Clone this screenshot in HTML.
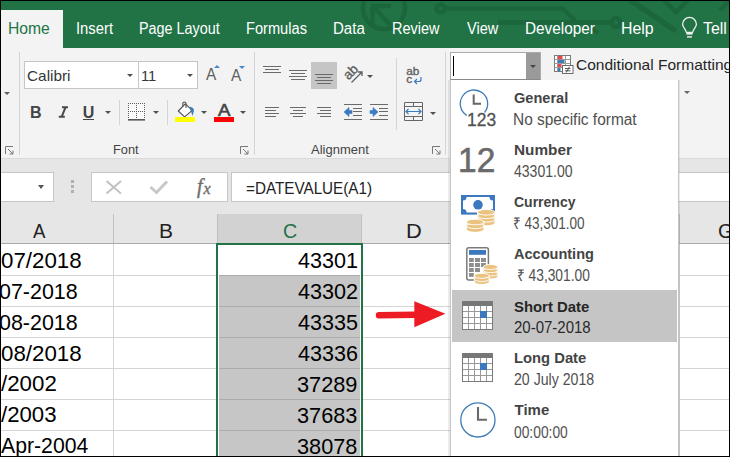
<!DOCTYPE html><html><head><meta charset="utf-8"><style>
html,body{margin:0;padding:0;}
body{width:730px;height:457px;overflow:hidden;position:relative;background:#000;font-family:"Liberation Sans",sans-serif;}
.b{position:absolute;box-sizing:border-box;}
.t{position:absolute;white-space:nowrap;transform-origin:0 0;}
svg{position:absolute;overflow:visible;}
</style></head><body>
<div class="b" style="left:1px;top:1px;width:728px;height:455px;background:#fff"></div>
<div class="b" style="left:1px;top:1px;width:728px;height:47px;background:#217346"></div>
<svg style="left:1px;top:1px;overflow:hidden" width="728" height="47" viewBox="1 1 728 47">
<g fill="none" stroke="#1c663c" stroke-width="4.5">
<circle cx="384" cy="8" r="21"/>
<path d="M374 7 L392 27 M371 6 H391 M372.5 6 V26" />
<circle cx="440.5" cy="8.5" r="4"/>
<path d="M444.5 8.5 H563 L577 22.5 H611"/>
<path d="M498 22.5 H584 L598 33"/><circle cx="616" cy="22.5" r="4.5"/>
<path d="M630 0 L676 31" stroke-width="5.5"/>
<path d="M662 -2 L676 12 L690 -2"/>
<path d="M720 10 L732 -2"/>
</g></svg>
<div class="b" style="left:1px;top:10px;width:62px;height:38px;background:#f3f3f3"></div>
<div class="t" style="left:8.45px;top:21px;font-size:16px;line-height:16px;color:#217346;transform:scaleX(0.9793);">Home</div>
<div class="t" style="left:75.67px;top:21px;font-size:16px;line-height:16px;color:#fff;transform:scaleX(0.9252);">Insert</div>
<div class="t" style="left:139.15px;top:21px;font-size:16px;line-height:16px;color:#fff;transform:scaleX(0.8974);">Page Layout</div>
<div class="t" style="left:246.33px;top:21px;font-size:16px;line-height:16px;color:#fff;transform:scaleX(0.9140);">Formulas</div>
<div class="t" style="left:333.30px;top:21px;font-size:16px;line-height:16px;color:#fff;transform:scaleX(0.9390);">Data</div>
<div class="t" style="left:392.24px;top:21px;font-size:16px;line-height:16px;color:#fff;transform:scaleX(0.9043);">Review</div>
<div class="t" style="left:467.33px;top:21px;font-size:16px;line-height:16px;color:#fff;transform:scaleX(0.9062);">View</div>
<div class="t" style="left:525.37px;top:21px;font-size:16px;line-height:16px;color:#fff;transform:scaleX(0.9585);">Developer</div>
<div class="t" style="left:621.43px;top:21px;font-size:16px;line-height:16px;color:#fff;transform:scaleX(0.9916);">Help</div>
<div class="t" style="left:702.68px;top:21px;font-size:16px;line-height:16px;color:#fff;transform:scaleX(0.9938);">Tell</div>
<svg style="left:678px;top:14px" width="24" height="26" viewBox="678 14 24 26">
<path d="M686.3 32.3 C686 29.5 682.6 27.5 682.6 24.3 A6.9 6.9 0 0 1 696.4 24.3 C696.4 27.5 693 29.5 692.7 32.3 Z" fill="none" stroke="#f0f0f0" stroke-width="1.3" stroke-linejoin="round"/>
<rect x="686.4" y="32.8" width="6.2" height="1.8" fill="#f0f0f0"/>
<rect x="687" y="36.2" width="5" height="1.4" fill="#f0f0f0"/>
</svg>
<div class="b" style="left:1px;top:48px;width:728px;height:110px;background:#f3f3f3"></div>
<div class="b" style="left:1px;top:158px;width:728px;height:1px;background:#dadada"></div>
<div class="b" style="left:1px;top:159px;width:728px;height:85px;background:#e6e6e6"></div>
<div class="b" style="left:19px;top:52px;width:1px;height:103px;background:#d4d4d4"></div>
<div class="b" style="left:254px;top:52px;width:1px;height:103px;background:#d4d4d4"></div>
<div class="b" style="left:445px;top:52px;width:1px;height:103px;background:#d4d4d4"></div>
<div class="b" style="left:396px;top:58px;width:1px;height:72px;background:#d4d4d4"></div>
<div class="b" style="left:119px;top:100px;width:1px;height:25px;background:#d4d4d4"></div>
<div class="b" style="left:167px;top:100px;width:1px;height:25px;background:#d4d4d4"></div>
<div class="b" style="left:4px;top:92px;width:0;height:0;border-left:3.0px solid transparent;border-right:3.0px solid transparent;border-top:3px solid #606060;"></div>
<div class="b" style="left:24px;top:61px;width:115px;height:28px;background:#fff;border:1px solid #c6c6c6"></div>
<div class="b" style="left:138px;top:61px;width:60px;height:28px;background:#fff;border:1px solid #c6c6c6"></div>
<div class="t" style="left:26.73px;top:68px;font-size:15px;line-height:15px;color:#363636;transform:scaleX(1.0239);">Calibri</div>
<div class="t" style="left:140.89px;top:68px;font-size:15px;line-height:15px;color:#363636;transform:scaleX(0.9836);">11</div>
<div class="b" style="left:127px;top:74px;width:0;height:0;border-left:3.0px solid transparent;border-right:3.0px solid transparent;border-top:3px solid #505050;"></div>
<div class="b" style="left:187px;top:74px;width:0;height:0;border-left:3.0px solid transparent;border-right:3.0px solid transparent;border-top:3px solid #505050;"></div>
<div class="t" style="left:206.20px;top:67px;font-size:16px;line-height:16px;color:#606060;transform:scaleX(0.9586);">A</div>
<div class="t" style="left:231.20px;top:68px;font-size:16px;line-height:16px;color:#606060;transform:scaleX(0.9586);">A</div>
<div class="b" style="left:214px;top:65px;width:0;height:0;border-left:3px solid transparent;border-right:3px solid transparent;border-bottom:3px solid #4a86c8"></div>
<div class="b" style="left:239px;top:66px;width:0;height:0;border-left:3.0px solid transparent;border-right:3.0px solid transparent;border-top:3px solid #4a86c8;"></div>
<div class="t" style="left:29.96px;top:105px;font-size:16px;line-height:16px;color:#444;font-weight:bold;">B</div>
<svg style="left:55px;top:104px" width="16" height="16" viewBox="55 104 16 16"><path d="M62 107.2 H68 M58.8 116.8 H64.8 M65.6 107.2 L61.6 116.8" fill="none" stroke="#4a4a4a" stroke-width="2"/></svg>
<div class="t" style="left:82.74px;top:105px;font-size:16px;line-height:16px;color:#444;font-weight:bold;">U</div>
<div class="b" style="left:83px;top:119px;width:11px;height:1px;background:#444"></div>
<div class="b" style="left:105px;top:111px;width:0;height:0;border-left:3.0px solid transparent;border-right:3.0px solid transparent;border-top:3px solid #505050;"></div>
<div class="b" style="left:153px;top:111px;width:0;height:0;border-left:3.0px solid transparent;border-right:3.0px solid transparent;border-top:3px solid #505050;"></div>
<div class="b" style="left:201px;top:111px;width:0;height:0;border-left:3.0px solid transparent;border-right:3.0px solid transparent;border-top:3px solid #505050;"></div>
<div class="b" style="left:240px;top:111px;width:0;height:0;border-left:3.0px solid transparent;border-right:3.0px solid transparent;border-top:3px solid #505050;"></div>
<svg style="left:124px;top:98px" width="26" height="26" viewBox="124 98 26 26">
<rect x="128" y="103" width="17" height="16" fill="#fbfbfb"/>
<g fill="#5a5a5a"><rect x="128" y="103" width="1" height="1"/><rect x="128" y="105" width="1" height="1"/><rect x="128" y="107" width="1" height="1"/><rect x="128" y="109" width="1" height="1"/><rect x="128" y="111" width="1" height="1"/><rect x="128" y="113" width="1" height="1"/><rect x="128" y="115" width="1" height="1"/><rect x="128" y="117" width="1" height="1"/><rect x="130" y="103" width="1" height="1"/><rect x="130" y="111" width="1" height="1"/><rect x="132" y="103" width="1" height="1"/><rect x="132" y="111" width="1" height="1"/><rect x="134" y="103" width="1" height="1"/><rect x="134" y="111" width="1" height="1"/><rect x="136" y="103" width="1" height="1"/><rect x="136" y="105" width="1" height="1"/><rect x="136" y="107" width="1" height="1"/><rect x="136" y="109" width="1" height="1"/><rect x="136" y="111" width="1" height="1"/><rect x="136" y="113" width="1" height="1"/><rect x="136" y="115" width="1" height="1"/><rect x="136" y="117" width="1" height="1"/><rect x="138" y="103" width="1" height="1"/><rect x="138" y="111" width="1" height="1"/><rect x="140" y="103" width="1" height="1"/><rect x="140" y="111" width="1" height="1"/><rect x="142" y="103" width="1" height="1"/><rect x="142" y="111" width="1" height="1"/><rect x="144" y="103" width="1" height="1"/><rect x="144" y="105" width="1" height="1"/><rect x="144" y="107" width="1" height="1"/><rect x="144" y="109" width="1" height="1"/><rect x="144" y="111" width="1" height="1"/><rect x="144" y="113" width="1" height="1"/><rect x="144" y="115" width="1" height="1"/><rect x="144" y="117" width="1" height="1"/></g>
<rect x="128" y="119" width="17" height="1.6" fill="#555"/></svg>
<svg style="left:172px;top:98px" width="26" height="26" viewBox="172 98 26 26">
<path d="M178.3 111 L185.3 103.8 L192.2 110.3 L184.6 116.8 Z" fill="#fff" stroke="#505050" stroke-width="1.1" stroke-linejoin="round"/>
<path d="M182.8 106.5 V103.6 A1.6 1.6 0 0 1 186 103.6 V108" fill="none" stroke="#505050" stroke-width="1.1"/>
<path d="M189.5 107 C192.5 106.8 194.5 109 193.8 111.5 C193.5 113 192.8 114.5 192.3 116 C191.8 114 191.5 112 190.6 110.6 Z" fill="#3d7ab8"/>
<rect x="175" y="117" width="20" height="5" fill="#ffff00"/></svg>
<div class="t" style="left:217.90px;top:102px;font-size:17px;line-height:17px;color:#454545;transform:scaleX(1.0969);-webkit-text-stroke:0.6px #454545;">A</div>
<div class="b" style="left:214px;top:117px;width:20px;height:5px;background:#ff0000"></div>
<div class="b" style="left:263px;top:66px;width:18px;height:1px;background:#6a6a6a"></div>
<div class="b" style="left:265px;top:69px;width:14px;height:1px;background:#6a6a6a"></div>
<div class="b" style="left:263px;top:72px;width:18px;height:1px;background:#6a6a6a"></div>
<div class="b" style="left:289px;top:70px;width:18px;height:1px;background:#6a6a6a"></div>
<div class="b" style="left:291px;top:73px;width:14px;height:1px;background:#6a6a6a"></div>
<div class="b" style="left:289px;top:76px;width:18px;height:1px;background:#6a6a6a"></div>
<div class="b" style="left:291px;top:79px;width:14px;height:1px;background:#6a6a6a"></div>
<div class="b" style="left:311px;top:62px;width:26px;height:27px;background:#c5c5c5"></div>
<div class="b" style="left:315px;top:74px;width:18px;height:1px;background:#6a6a6a"></div>
<div class="b" style="left:317px;top:77px;width:14px;height:1px;background:#6a6a6a"></div>
<div class="b" style="left:315px;top:80px;width:18px;height:1px;background:#6a6a6a"></div>
<div class="b" style="left:317px;top:83px;width:14px;height:1px;background:#6a6a6a"></div>
<div class="b" style="left:265px;top:107px;width:14px;height:1px;background:#6a6a6a"></div>
<div class="b" style="left:265px;top:110px;width:11px;height:1px;background:#6a6a6a"></div>
<div class="b" style="left:265px;top:113px;width:14px;height:1px;background:#6a6a6a"></div>
<div class="b" style="left:265px;top:116px;width:11px;height:1px;background:#6a6a6a"></div>
<div class="b" style="left:290px;top:107px;width:16px;height:1px;background:#6a6a6a"></div>
<div class="b" style="left:293px;top:110px;width:10px;height:1px;background:#6a6a6a"></div>
<div class="b" style="left:290px;top:113px;width:16px;height:1px;background:#6a6a6a"></div>
<div class="b" style="left:293px;top:116px;width:10px;height:1px;background:#6a6a6a"></div>
<div class="b" style="left:317px;top:107px;width:14px;height:1px;background:#6a6a6a"></div>
<div class="b" style="left:320px;top:110px;width:11px;height:1px;background:#6a6a6a"></div>
<div class="b" style="left:317px;top:113px;width:14px;height:1px;background:#6a6a6a"></div>
<div class="b" style="left:320px;top:116px;width:11px;height:1px;background:#6a6a6a"></div>
<div class="b" style="left:344px;top:104px;width:18px;height:1px;background:#6a6a6a"></div>
<div class="b" style="left:353px;top:108px;width:9px;height:1px;background:#6a6a6a"></div>
<div class="b" style="left:353px;top:111px;width:9px;height:1px;background:#6a6a6a"></div>
<div class="b" style="left:353px;top:115px;width:9px;height:1px;background:#6a6a6a"></div>
<div class="b" style="left:344px;top:119px;width:18px;height:1px;background:#6a6a6a"></div>
<div class="b" style="left:370px;top:104px;width:18px;height:1px;background:#6a6a6a"></div>
<div class="b" style="left:379px;top:108px;width:9px;height:1px;background:#6a6a6a"></div>
<div class="b" style="left:379px;top:111px;width:9px;height:1px;background:#6a6a6a"></div>
<div class="b" style="left:379px;top:115px;width:9px;height:1px;background:#6a6a6a"></div>
<div class="b" style="left:370px;top:119px;width:18px;height:1px;background:#6a6a6a"></div>
<svg style="left:340px;top:100px" width="50" height="24" viewBox="340 100 50 24">
<path d="M344 112 L349 107.5 V110.5 H352 V113.5 H349 V116.5 Z" fill="#3b7bc4" stroke="#3b7bc4" stroke-width="0.6" stroke-linejoin="round"/>
<path d="M378 112 L373 107.5 V110.5 H370 V113.5 H373 V116.5 Z" fill="#3b7bc4" stroke="#3b7bc4" stroke-width="0.6" stroke-linejoin="round"/>
</svg>
<svg style="left:340px;top:62px" width="26" height="24" viewBox="340 62 26 24">
<text x="0" y="0" transform="translate(348.5 80.5) rotate(-45)" font-family="Liberation Sans" font-size="13.5" fill="#5e5e5e" stroke="#5e5e5e" stroke-width="0.35">ab</text>
<path d="M351.5 82.5 L361.5 72.5 M358 72 H362 V76" fill="none" stroke="#5e5e5e" stroke-width="1.3"/></svg>
<div class="b" style="left:367px;top:75px;width:0;height:0;border-left:3.0px solid transparent;border-right:3.0px solid transparent;border-top:3px solid #505050;"></div>
<svg style="left:404px;top:64px" width="22" height="22" viewBox="404 64 22 22">
<text x="0" y="0" transform="translate(406.2 74.8) scale(1.18 1)" font-family="Liberation Sans" font-size="10" fill="#5e5e5e" stroke="#5e5e5e" stroke-width="0.3">ab</text>
<text x="0" y="0" transform="translate(406.2 82.7) scale(1.18 1)" font-family="Liberation Sans" font-size="10" fill="#5e5e5e" stroke="#5e5e5e" stroke-width="0.3">c</text>
<path d="M421 77 V79.5 A2 2 0 0 1 419 81.5 H414.5 M417 79 L414.5 81.5 L417 84" fill="none" stroke="#3b7bc4" stroke-width="1.2"/></svg>
<svg style="left:402px;top:100px" width="24" height="24" viewBox="402 100 24 24">
<path d="M404.5 102.5 H422.5 V120.5 H404.5 Z M404.5 106.5 H422.5 M404.5 116.5 H422.5 M413.5 102.5 V106.5 M413.5 116.5 V120.5" fill="none" stroke="#666" stroke-width="1"/>
<path d="M406 111.5 H421 M408.5 109 L406 111.5 L408.5 114 M418.5 109 L421 111.5 L418.5 114" fill="none" stroke="#3b7bc4" stroke-width="1.2"/></svg>
<div class="b" style="left:430px;top:112px;width:0;height:0;border-left:3.0px solid transparent;border-right:3.0px solid transparent;border-top:3px solid #505050;"></div>
<div class="t" style="left:113.48px;top:144px;font-size:12px;line-height:12px;color:#444;transform:scaleX(1.0661);">Font</div>
<div class="t" style="left:311.00px;top:144px;font-size:12px;line-height:12px;color:#444;transform:scaleX(1.0830);">Alignment</div>
<svg style="left:5px;top:146px" width="10" height="9" viewBox="0 0 10 9">
<path d="M0.5 8 V0.5 H8" fill="none" stroke="#777" stroke-width="1"/><path d="M3 3 L8 8 M8 4.5 V8 H4.5" fill="none" stroke="#777" stroke-width="1"/></svg>
<svg style="left:240px;top:146px" width="10" height="9" viewBox="0 0 10 9">
<path d="M0.5 8 V0.5 H8" fill="none" stroke="#777" stroke-width="1"/><path d="M3 3 L8 8 M8 4.5 V8 H4.5" fill="none" stroke="#777" stroke-width="1"/></svg>
<svg style="left:432px;top:146px" width="10" height="9" viewBox="0 0 10 9">
<path d="M0.5 8 V0.5 H8" fill="none" stroke="#777" stroke-width="1"/><path d="M3 3 L8 8 M8 4.5 V8 H4.5" fill="none" stroke="#777" stroke-width="1"/></svg>
<div class="b" style="left:450px;top:52px;width:91px;height:28px;background:#fff;border:1px solid #ababab;border-bottom-color:#8a8a8a"></div>
<div class="b" style="left:526px;top:53px;width:14px;height:26px;background:#9a9a9a"></div>
<div class="b" style="left:530px;top:65px;width:0;height:0;border-left:3.0px solid transparent;border-right:3.0px solid transparent;border-top:3px solid #444;"></div>
<div class="b" style="left:453px;top:56px;width:1px;height:20px;background:#000"></div>
<svg style="left:548px;top:50px" width="30" height="30" viewBox="548 50 30 30">
<rect x="554.5" y="55.5" width="16" height="16" fill="#fff" stroke="#7a7a7a" stroke-width="1"/>
<path d="M557.5 55.5 V71.5 M565.5 55.5 V71.5 M554.5 59.5 H570.5 M554.5 63.5 H570.5 M554.5 67.5 H570.5" stroke="#9a9a9a" stroke-width="1"/>
<rect x="558" y="56" width="4.5" height="3.2" fill="#e8474a"/>
<rect x="558" y="60" width="6.5" height="3" fill="#3d7ab8"/>
<rect x="558" y="64" width="3.5" height="3" fill="#e8474a"/>
<rect x="558" y="68" width="2.5" height="3.3" fill="#3d7ab8"/>
<rect x="562.5" y="65.5" width="10.5" height="8" fill="#fff" stroke="#6a6a6a" stroke-width="1"/>
<path d="M565 68.6 H570.5 M565 70.8 H570.5 M569.3 66.8 L566.2 72.6" stroke="#444" stroke-width="0.9"/>
</svg>
<div class="t" style="left:575.82px;top:57px;font-size:15px;line-height:15px;color:#262626;transform:scaleX(1.0350);">Conditional Formatting</div>
<div class="b" style="left:684px;top:91px;width:0;height:0;border-left:3.0px solid transparent;border-right:3.0px solid transparent;border-top:3px solid #666;"></div>
<div class="b" style="left:-10px;top:172px;width:64px;height:30px;background:#fff;border:1px solid #c6c6c6"></div>
<div class="b" style="left:38px;top:185px;width:0;height:0;border-left:3.5px solid transparent;border-right:3.5px solid transparent;border-top:4px solid #555;"></div>
<div class="b" style="left:71px;top:180px;width:3px;height:3px;background:#b0b0b0"></div>
<div class="b" style="left:71px;top:185px;width:3px;height:3px;background:#b0b0b0"></div>
<div class="b" style="left:71px;top:190px;width:3px;height:3px;background:#b0b0b0"></div>
<div class="b" style="left:91px;top:172px;width:137px;height:30px;background:#fff;border:1px solid #c6c6c6"></div>
<svg style="left:100px;top:175px" width="75" height="25" viewBox="100 175 75 25">
<path d="M106.5 181 L121 193.5 M121 181 L106.5 193.5" stroke="#c2c2c2" stroke-width="2"/>
<path d="M150.5 187 L156.5 192.5 L167 181.5" fill="none" stroke="#c8c8c8" stroke-width="3"/></svg>
<div class="t" style="left:197px;top:176px;font:italic 20px/20px 'Liberation Serif';color:#6e6e6e;-webkit-text-stroke:0.4px #6e6e6e">f</div><div class="t" style="left:203.5px;top:181px;font:italic 16px/16px 'Liberation Serif';color:#6e6e6e;-webkit-text-stroke:0.4px #6e6e6e">x</div>
<div class="b" style="left:231px;top:172px;width:500px;height:30px;background:#fff;border:1px solid #c6c6c6"></div>
<div class="t" style="left:245.54px;top:181px;font-size:16px;line-height:16px;color:#222;transform:scaleX(0.9528);">=DATEVALUE(A1)</div>
<div class="b" style="left:218px;top:214px;width:144px;height:30px;background:#d2d2d2"></div>
<div class="b" style="left:1px;top:243px;width:728px;height:1px;background:#ababab"></div>
<div class="b" style="left:113px;top:214px;width:1px;height:29px;background:#c0c0c0"></div>
<div class="b" style="left:217px;top:214px;width:1px;height:29px;background:#c0c0c0"></div>
<div class="b" style="left:361px;top:214px;width:1px;height:29px;background:#c0c0c0"></div>
<div class="b" style="left:505px;top:214px;width:1px;height:29px;background:#c0c0c0"></div>
<div class="b" style="left:679px;top:214px;width:1px;height:29px;background:#c0c0c0"></div>
<div class="t" style="left:33.00px;top:221px;font-size:20px;line-height:20px;color:#222;transform:scaleX(0.9323);">A</div>
<div class="t" style="left:158.83px;top:221px;font-size:20px;line-height:20px;color:#222;transform:scaleX(1.0467);">B</div>
<div class="t" style="left:282.72px;top:221px;font-size:20px;line-height:20px;color:#217346;transform:scaleX(0.9843);">C</div>
<div class="t" style="left:405.75px;top:221px;font-size:20px;line-height:20px;color:#222;transform:scaleX(1.0924);">D</div>
<div class="t" style="left:718px;top:221px;font-size:20px;line-height:20px;color:#222">G</div>
<div class="b" style="left:1px;top:275px;width:728px;height:1px;background:#d4d4d4"></div>
<div class="b" style="left:1px;top:306px;width:728px;height:1px;background:#d4d4d4"></div>
<div class="b" style="left:1px;top:337px;width:728px;height:1px;background:#d4d4d4"></div>
<div class="b" style="left:1px;top:368px;width:728px;height:1px;background:#d4d4d4"></div>
<div class="b" style="left:1px;top:399px;width:728px;height:1px;background:#d4d4d4"></div>
<div class="b" style="left:1px;top:430px;width:728px;height:1px;background:#d4d4d4"></div>
<div class="b" style="left:113px;top:244px;width:1px;height:212px;background:#d4d4d4"></div>
<div class="b" style="left:505px;top:244px;width:1px;height:212px;background:#d4d4d4"></div>
<div class="b" style="left:679px;top:244px;width:1px;height:212px;background:#d4d4d4"></div>
<div class="b" style="left:218px;top:245px;width:143px;height:211px;background:#fff"></div>
<div class="b" style="left:219px;top:275px;width:141px;height:181px;background:#c6c6c6"></div>
<div class="b" style="left:219px;top:275px;width:141px;height:1px;background:#ababab"></div>
<div class="b" style="left:219px;top:306px;width:141px;height:1px;background:#ababab"></div>
<div class="b" style="left:219px;top:337px;width:141px;height:1px;background:#ababab"></div>
<div class="b" style="left:219px;top:368px;width:141px;height:1px;background:#ababab"></div>
<div class="b" style="left:219px;top:399px;width:141px;height:1px;background:#ababab"></div>
<div class="b" style="left:219px;top:430px;width:141px;height:1px;background:#ababab"></div>
<div class="b" style="left:216px;top:243px;width:2px;height:213px;background:#217346"></div>
<div class="b" style="left:361px;top:243px;width:2px;height:213px;background:#217346"></div>
<div class="b" style="left:216px;top:243px;width:147px;height:2px;background:#217346"></div>
<div class="b" style="left:1px;top:244px;width:112px;height:212px;overflow:hidden">
<div class="t" style="left:-0.29px;top:6px;font-size:22px;line-height:22px;color:#000;transform:scaleX(1.0145)">07/2018</div>
<div class="t" style="right:112.79px;top:6px;font-size:22px;line-height:22px;color:#000;transform:scaleX(1.0145);transform-origin:100% 0">20/</div>
<div class="t" style="left:-2.26px;top:37px;font-size:22px;line-height:22px;color:#000;transform:scaleX(0.9749)">07-2018</div>
<div class="t" style="right:114.76px;top:37px;font-size:22px;line-height:22px;color:#000;transform:scaleX(0.9749);transform-origin:100% 0">20-</div>
<div class="t" style="left:-2.26px;top:68px;font-size:22px;line-height:22px;color:#000;transform:scaleX(0.9749)">08-2018</div>
<div class="t" style="right:114.76px;top:68px;font-size:22px;line-height:22px;color:#000;transform:scaleX(0.9749);transform-origin:100% 0">15-</div>
<div class="t" style="left:-0.19px;top:99px;font-size:22px;line-height:22px;color:#000;transform:scaleX(1.0145)">08/2018</div>
<div class="t" style="right:112.69px;top:99px;font-size:22px;line-height:22px;color:#000;transform:scaleX(1.0145);transform-origin:100% 0">16/</div>
<div class="t" style="left:0.20px;top:129px;font-size:22px;line-height:22px;color:#000;transform:scaleX(1.0130)">/2002</div>
<div class="t" style="right:112.30px;top:129px;font-size:22px;line-height:22px;color:#000;transform:scaleX(1.0130);transform-origin:100% 0">5/4</div>
<div class="t" style="left:0.20px;top:160px;font-size:22px;line-height:22px;color:#000;transform:scaleX(1.0089)">/2003</div>
<div class="t" style="right:112.30px;top:160px;font-size:22px;line-height:22px;color:#000;transform:scaleX(1.0089);transform-origin:100% 0">9/6</div>
<div class="t" style="left:-0.20px;top:191px;font-size:22px;line-height:22px;color:#000;transform:scaleX(0.9647)">Apr-2004</div>
<div class="t" style="right:112.70px;top:191px;font-size:22px;line-height:22px;color:#000;transform:scaleX(0.9647);transform-origin:100% 0">15-</div>
</div>
<div class="t" style="left:297.77px;top:250px;font-size:22px;line-height:22px;color:#000;transform:scaleX(0.9811);">43301</div>
<div class="t" style="left:297.77px;top:281px;font-size:22px;line-height:22px;color:#000;transform:scaleX(0.9829);">43302</div>
<div class="t" style="left:297.77px;top:312px;font-size:22px;line-height:22px;color:#000;transform:scaleX(0.9793);">43335</div>
<div class="t" style="left:297.77px;top:343px;font-size:22px;line-height:22px;color:#000;transform:scaleX(0.9793);">43336</div>
<div class="t" style="left:297.33px;top:374px;font-size:22px;line-height:22px;color:#000;transform:scaleX(0.9884);">37289</div>
<div class="t" style="left:297.33px;top:405px;font-size:22px;line-height:22px;color:#000;transform:scaleX(0.9865);">37683</div>
<div class="t" style="left:297.33px;top:436px;font-size:22px;line-height:22px;color:#000;transform:scaleX(0.9865);">38078</div>
<svg style="left:370px;top:298px" width="80" height="34" viewBox="370 298 80 34">
<path d="M379 312 L415 311.5 V318 L379 318.5 A3.2 3.2 0 0 1 379 312 Z" fill="#ed1c24"/>
<path d="M414.3 301.3 L445.4 313.7 L414.3 327.2 Z" fill="#ed1c24"/></svg>
<div class="b" style="left:448px;top:80px;width:2px;height:377px;background:rgba(0,0,0,0.08)"></div>
<div class="b" style="left:678px;top:80px;width:2px;height:377px;background:rgba(0,0,0,0.08)"></div>
<div class="b" style="left:450px;top:80px;width:229px;height:377px;background:#fff;border:1px solid #c6c6c6;border-top:none"></div>
<div class="b" style="left:452px;top:290px;width:225px;height:52px;background:#c5c5c5"></div>
<div class="t" style="left:514.12px;top:90px;font-size:15px;line-height:15px;color:#444;font-weight:bold;transform:scaleX(0.9700);">General</div>
<div class="t" style="left:513.46px;top:112px;font-size:16px;line-height:16px;color:#505050;transform:scaleX(0.9657);">No specific format</div>
<div class="t" style="left:513.70px;top:142px;font-size:15px;line-height:15px;color:#444;font-weight:bold;transform:scaleX(1.0216);">Number</div>
<div class="t" style="left:514.42px;top:164px;font-size:16px;line-height:16px;color:#505050;transform:scaleX(0.8779);">43301.00</div>
<div class="t" style="left:514.14px;top:194px;font-size:15px;line-height:15px;color:#444;font-weight:bold;transform:scaleX(0.9329);">Currency</div>
<div class="t" style="left:513.35px;top:216px;font-size:16px;line-height:16px;color:#505050;transform:scaleX(0.8462);">₹ 43,301.00</div>
<div class="t" style="left:514.34px;top:246px;font-size:15px;line-height:15px;color:#444;font-weight:bold;transform:scaleX(0.9686);">Accounting</div>
<div class="t" style="left:517.12px;top:268px;font-size:16px;line-height:16px;color:#505050;transform:scaleX(0.8603);">₹ 43,301.00</div>
<div class="t" style="left:514.25px;top:299px;font-size:15px;line-height:15px;color:#262626;font-weight:bold;transform:scaleX(0.9927);">Short Date</div>
<div class="t" style="left:513.95px;top:320px;font-size:16px;line-height:16px;color:#2a2a2a;transform:scaleX(0.9366);">20-07-2018</div>
<div class="t" style="left:513.74px;top:350px;font-size:15px;line-height:15px;color:#444;font-weight:bold;transform:scaleX(0.9854);">Long Date</div>
<div class="t" style="left:513.99px;top:372px;font-size:16px;line-height:16px;color:#505050;transform:scaleX(0.8837);">20 July 2018</div>
<div class="t" style="left:514.55px;top:402px;font-size:15px;line-height:15px;color:#444;font-weight:bold;">Time</div>
<div class="t" style="left:514.15px;top:425px;font-size:16px;line-height:16px;color:#505050;transform:scaleX(0.8634);">00:00:00</div>
<div class="t" style="left:467.49px;top:110px;font-size:19px;line-height:19px;color:#505050;transform:scaleX(0.9168);-webkit-text-stroke:0.3px #505050;">123</div>
<svg style="left:455px;top:85px" width="40" height="40" viewBox="455 85 40 40">
<path d="M466.8 115.4 A13.7 13.7 0 1 1 484.5 112.5" fill="none" stroke="#3d7ab8" stroke-width="1.3"/>
<path d="M473.7 94.5 V103.8 H481" fill="none" stroke="#666" stroke-width="2"/></svg>
<div class="t" style="left:458.49px;top:142px;font-size:35px;line-height:35px;color:#6a6a6a;transform:scaleX(0.9572);-webkit-text-stroke:0.6px #6a6a6a;">12</div>
<svg style="left:455px;top:190px" width="45" height="45" viewBox="455 190 45 45">
<rect x="461" y="195" width="34" height="19.6" fill="#3b78bd"/>
<path d="M466.5 197 H489.5 A3.5 3.5 0 0 0 493 200.5 V209 A3.5 3.5 0 0 0 489.5 212.6 H466.5 A3.5 3.5 0 0 0 463 209 V200.5 A3.5 3.5 0 0 0 466.5 197 Z" fill="#fff"/>
<circle cx="478" cy="204.8" r="4.8" fill="#3b78bd"/>
<g fill="#ebc27f" stroke="#fff" stroke-width="0.9">
<path d="M477.5 212 V223 A8.7 2.8 0 0 0 494.9 223 V212 Z"/><ellipse cx="486.2" cy="219.5" rx="8.7" ry="2.6"/><ellipse cx="486.2" cy="216" rx="8.7" ry="2.6"/><ellipse cx="486.2" cy="212.3" rx="8.7" ry="2.8"/>
<path d="M466.5 222 V229.5 A8.7 2.8 0 0 0 483.9 229.5 V222 Z"/><ellipse cx="475.2" cy="226" rx="8.7" ry="2.6"/><ellipse cx="475.2" cy="222" rx="8.7" ry="2.8"/>
</g></svg>
<svg style="left:455px;top:240px" width="50" height="50" viewBox="455 240 50 50">
<rect x="466.8" y="247.8" width="21.6" height="32.2" rx="2" fill="#fff" stroke="#7a7a7a" stroke-width="1.5"/>
<rect x="469" y="250" width="17" height="4.8" fill="#3b78bd"/>
<g fill="#8e8e8e"><rect x="469" y="258" width="4.8" height="4"/><rect x="475" y="258" width="5" height="4"/><rect x="481" y="258" width="5" height="4"/>
<rect x="469" y="263" width="4.8" height="4"/><rect x="475" y="263" width="5" height="4"/><rect x="481" y="263" width="5" height="4"/>
<rect x="469" y="268" width="4.8" height="4"/><rect x="475" y="268" width="5" height="4"/><rect x="469" y="273" width="4.8" height="3.8"/></g>
<g fill="#ebc27f" stroke="#fff" stroke-width="0.9">
<path d="M483.2 267 V276.5 A7.3 2.5 0 0 0 497.8 276.5 V267 Z"/><ellipse cx="490.5" cy="273.7" rx="7.3" ry="2.3"/><ellipse cx="490.5" cy="270.3" rx="7.3" ry="2.3"/><ellipse cx="490.5" cy="267" rx="7.3" ry="2.5"/>
<path d="M474.3 276 V282 A7.5 2.4 0 0 0 489.3 282 V276 Z"/><ellipse cx="481.8" cy="279.2" rx="7.5" ry="2.3"/><ellipse cx="481.8" cy="275.8" rx="7.5" ry="2.5"/>
</g></svg>
<svg style="left:462px;top:301px" width="31" height="29" viewBox="0 0 31 29"><rect x="0" y="0" width="31" height="29" fill="#999"/><rect x="0" y="0" width="31" height="5" fill="#777"/><path d="M0.5 0 V29 M30.5 0 V29 M0 28.5 H31" stroke="#7a7a7a" stroke-width="1"/><rect x="1" y="5" width="5" height="5" fill="#fff"/><rect x="7" y="5" width="5" height="5" fill="#fff"/><rect x="13" y="5" width="5" height="5" fill="#fff"/><rect x="19" y="5" width="5" height="5" fill="#fff"/><rect x="25" y="5" width="5" height="5" fill="#fff"/><rect x="1" y="11" width="5" height="5" fill="#fff"/><rect x="7" y="11" width="5" height="5" fill="#fff"/><rect x="13" y="11" width="5" height="5" fill="#fff"/><rect x="19" y="11" width="5" height="5" fill="#fff"/><rect x="25" y="11" width="5" height="5" fill="#fff"/><rect x="1" y="17" width="5" height="5" fill="#fff"/><rect x="7" y="17" width="5" height="5" fill="#fff"/><rect x="13" y="17" width="5" height="5" fill="#fff"/><rect x="19" y="17" width="5" height="5" fill="#fff"/><rect x="25" y="17" width="5" height="5" fill="#fff"/><rect x="1" y="23" width="5" height="5" fill="#fff"/><rect x="7" y="23" width="5" height="5" fill="#fff"/><rect x="13" y="23" width="5" height="5" fill="#fff"/><rect x="19" y="23" width="5" height="5" fill="#fff"/><rect x="25" y="23" width="5" height="5" fill="#fff"/><rect x="18" y="10" width="7" height="7" fill="#3b78bd"/></svg>
<svg style="left:462px;top:353px" width="31" height="29" viewBox="0 0 31 29"><rect x="0" y="0" width="31" height="29" fill="#999"/><rect x="0" y="0" width="31" height="5" fill="#777"/><path d="M0.5 0 V29 M30.5 0 V29 M0 28.5 H31" stroke="#7a7a7a" stroke-width="1"/><rect x="1" y="5" width="5" height="5" fill="#fff"/><rect x="7" y="5" width="5" height="5" fill="#fff"/><rect x="13" y="5" width="5" height="5" fill="#fff"/><rect x="19" y="5" width="5" height="5" fill="#fff"/><rect x="25" y="5" width="5" height="5" fill="#fff"/><rect x="1" y="11" width="5" height="5" fill="#fff"/><rect x="7" y="11" width="5" height="5" fill="#fff"/><rect x="13" y="11" width="5" height="5" fill="#fff"/><rect x="19" y="11" width="5" height="5" fill="#fff"/><rect x="25" y="11" width="5" height="5" fill="#fff"/><rect x="1" y="17" width="5" height="5" fill="#fff"/><rect x="7" y="17" width="5" height="5" fill="#fff"/><rect x="13" y="17" width="5" height="5" fill="#fff"/><rect x="19" y="17" width="5" height="5" fill="#fff"/><rect x="25" y="17" width="5" height="5" fill="#fff"/><rect x="1" y="23" width="5" height="5" fill="#fff"/><rect x="7" y="23" width="5" height="5" fill="#fff"/><rect x="13" y="23" width="5" height="5" fill="#fff"/><rect x="19" y="23" width="5" height="5" fill="#fff"/><rect x="25" y="23" width="5" height="5" fill="#fff"/><rect x="18" y="10" width="7" height="7" fill="#3b78bd"/></svg>
<svg style="left:455px;top:397px" width="45" height="45" viewBox="455 397 45 45">
<circle cx="477.9" cy="419.9" r="17.1" fill="none" stroke="#3d7ab8" stroke-width="1.3"/>
<path d="M478 407 V419.8 H487" fill="none" stroke="#6a6a6a" stroke-width="2.1"/></svg>
<div class="b" style="left:0px;top:0px;width:730px;height:1px;background:#000"></div>
<div class="b" style="left:0px;top:0px;width:1px;height:457px;background:#000"></div>
<div class="b" style="left:729px;top:0px;width:1px;height:457px;background:#000"></div>
<div class="b" style="left:0px;top:456px;width:730px;height:1px;background:#000"></div>
</body></html>
